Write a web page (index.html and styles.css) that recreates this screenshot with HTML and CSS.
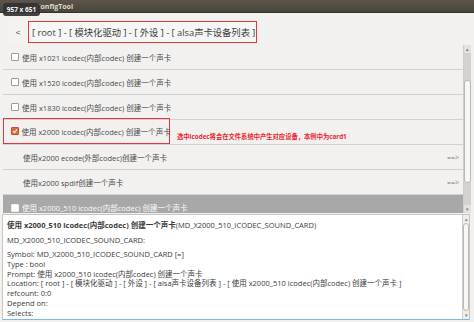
FILE: index.html
```html
<!DOCTYPE html>
<html>
    <head>
        <title>ConfigTool</title>
        <meta charset="utf-8">
        <link rel="stylesheet" href="styles.css">
    </head>
    <body>
        <div class="titlebar"><span class="title">ConfigTool</span></div>
        <div class="badge">957 x 651</div>

        <div class="crumbs">
            <button class="back">&lt;</button>
            <div class="path">[ root ] - [ 模块化驱动 ] - [ 外设 ] - [ alsa声卡设备列表 ]</div>
        </div>

        <div class="list">
            <div class="rows">
                <div class="row"><span class="box"></span>使用 x1021 icodec(内部codec) 创建一个声卡</div>
                <div class="row"><span class="box"></span>使用 x1520 icodec(内部codec) 创建一个声卡</div>
                <div class="row"><span class="box"></span>使用 x1830 icodec(内部codec) 创建一个声卡</div>
                <div class="row marked">
                    <span class="mark">
                        <span class="box checked"><svg viewBox="0 0 6 6" width="6" height="6"><path d="M1 3.2 L2.5 4.6 L5 1.4" fill="none" stroke="#fff" stroke-width="1.1"/></svg></span>使用 x2000 icodec(内部codec) 创建一个声卡
                    </span>
                    <span class="note">选中icodec将会在文件系统中产生对应设备，本例中为card1</span>
                </div>
                <div class="row menu">使用x2000 ecode(外部codec)创建一个声卡<span class="more">==&gt;</span></div>
                <div class="row menu">使用x2000 spdif创建一个声卡<span class="more">==&gt;</span></div>
                <div class="row selected"><span class="box"></span>使用 x2000_510 icodec(内部codec) 创建一个声卡</div>
            </div>
            <div class="scroll">
                <span class="arrow">&#9652;</span>
                <span class="track"><span class="thumb"></span></span>
                <span class="arrow">&#9662;</span>
            </div>
        </div>

        <div class="info">
            <div class="text">
                <div class="line"><b>使用 x2000_510 icodec(内部codec) 创建一个声卡</b>(MD_X2000_510_ICODEC_SOUND_CARD)</div>
                <div class="line gap">MD_X2000_510_ICODEC_SOUND_CARD:</div>
                <div class="line gap small">Symbol: MD_X2000_510_ICODEC_SOUND_CARD [=]</div>
                <div class="line">Type : bool</div>
                <div class="line">Prompt: 使用 x2000_510 icodec(内部codec) 创建一个声卡</div>
                <div class="line">Location: [ root ] - [ 模块化驱动 ] - [ 外设 ] - [ alsa声卡设备列表 ] - [ 使用 x2000_510 icodec(内部codec) 创建一个声卡 ]</div>
                <div class="line">refcount: 0:0</div>
                <div class="line">Depend on:</div>
                <div class="line">Selects:</div>
            </div>
            <div class="scroll small">
                <span class="arrow">&#9652;</span>
                <span class="track"><span class="thumb"></span></span>
                <span class="arrow">&#9662;</span>
            </div>
        </div>
    </body>
</html>
```

FILE: styles.css
```css
body{
    margin: 0;
    width: 474px;
    height: 322px;
    overflow: hidden;
    position: relative;
    background-color: #f2f1f0;
    font-family: "Open Sans", "Noto Sans CJK SC", sans-serif;
    color: #4a4a4a;
}

/* barra de titulo */
.titlebar{
    height: 13px;
    background: linear-gradient(#5c554a, #4a443b);
    border-bottom: 1px solid #34312c;
    box-sizing: border-box;
    display: flex;
    align-items: center;
    padding-left: 36px;
}
.title{
    font-size: 7px;
    font-weight: bold;
    color: #dcd8cf;
}
.badge{
    position: absolute;
    left: 3px;
    top: 3px;
    width: 37px;
    height: 13px;
    line-height: 13px;
    border-radius: 3px;
    background-color: rgba(50, 50, 50, 0.92);
    color: #f4f4f4;
    font-size: 6.5px;
    font-weight: bold;
    text-align: center;
}

/* caminho */
.crumbs{
    display: flex;
    padding: 8px 0 0 8px;
    height: 22px;
    margin-bottom: 2px;
}
.back{
    width: 20px;
    height: 22px;
    border: none;
    background: #f4f3f2;
    font-size: 8px;
    color: #444;
    padding: 0;
}
.path{
    width: 229px;
    box-sizing: border-box;
    border: 1.5px solid #e3363f;
    background-color: #f6f6f5;
    font-size: 9.3px;
    color: #3c3c3c;
    display: flex;
    align-items: center;
    padding-left: 3px;
    white-space: nowrap;
}

/* lista */
.list{
    display: flex;
    height: 168px;
    padding-left: 3px;
}
.rows{
    width: 460px;
    overflow: hidden;
}
.row{
    height: 25px;
    box-sizing: border-box;
    border-bottom: 1px solid #d4d2cf;
    display: flex;
    align-items: center;
    padding-left: 8px;
    font-size: 7.5px;
    white-space: nowrap;
}
.box{
    width: 6px;
    height: 6px;
    border: 1px solid #9a9a9a;
    border-radius: 1px;
    background-color: #fff;
    margin-right: 3px;
    flex-shrink: 0;
    display: flex;
}
.box.checked{
    background-color: #e5643f;
    border-color: #c4502f;
}
.row.marked{
    padding-left: 0;
    align-items: stretch;
}
.mark{
    display: flex;
    align-items: center;
    width: 167px;
    flex-shrink: 0;
    box-sizing: border-box;
    border: 1.5px solid #e3363f;
    padding-left: 6.5px;
    margin-top: -2px;
}
.note{
    align-self: flex-end;
    margin: 0 0 3px 7px;
    font-size: 6.3px;
    font-weight: bold;
    color: #e8262f;
}
.row.menu{
    padding-left: 20px;
}
.more{
    margin-left: auto;
    margin-right: 4px;
    font-size: 7px;
    color: #7a7a7a;
}
.row.selected{
    background-color: #a8a8a8;
    color: #fafafa;
    border-bottom: none;
}
.row.selected .box{
    border-color: #f2f2f2;
}

/* barras de rolagem */
.scroll{
    width: 7px;
    display: flex;
    flex-direction: column;
    background-color: #e3e2e0;
    border-left: 1px solid #d0cecb;
}
.arrow{
    height: 8px;
    font-size: 5px;
    line-height: 8px;
    text-align: center;
    color: #777;
}
.track{
    flex: 1;
    background-color: #d3d2cf;
    padding-top: 27px;
    padding-bottom: 22px;
}
.thumb{
    display: block;
    height: 100%;
    border: 1px solid #b9b8b5;
    border-radius: 3px;
    background-color: #f7f7f6;
    box-sizing: border-box;
}

/* detalhes */
.info{
    display: flex;
    margin: 1px 4px 0 2px;
    height: 106px;
    background-color: #fff;
    border: 1px solid #c6c5c2;
    border-bottom: 1.5px solid #7fb7e8;
    box-sizing: border-box;
}
.text{
    flex: 1;
    padding: 5.5px 0 0 4px;
    font-size: 7.5px;
    color: #3a3a3a;
    white-space: nowrap;
}
.line{
    height: 9.7px;
    line-height: 9.7px;
}
.line.gap{
    margin-top: 6px;
}
.line.gap.small{
    margin-top: 4.5px;
}
.scroll.small{
    width: 6px;
    background-color: #efeeec;
}
.scroll.small .track{
    background-color: #efeeec;
    padding: 0;
}
```
